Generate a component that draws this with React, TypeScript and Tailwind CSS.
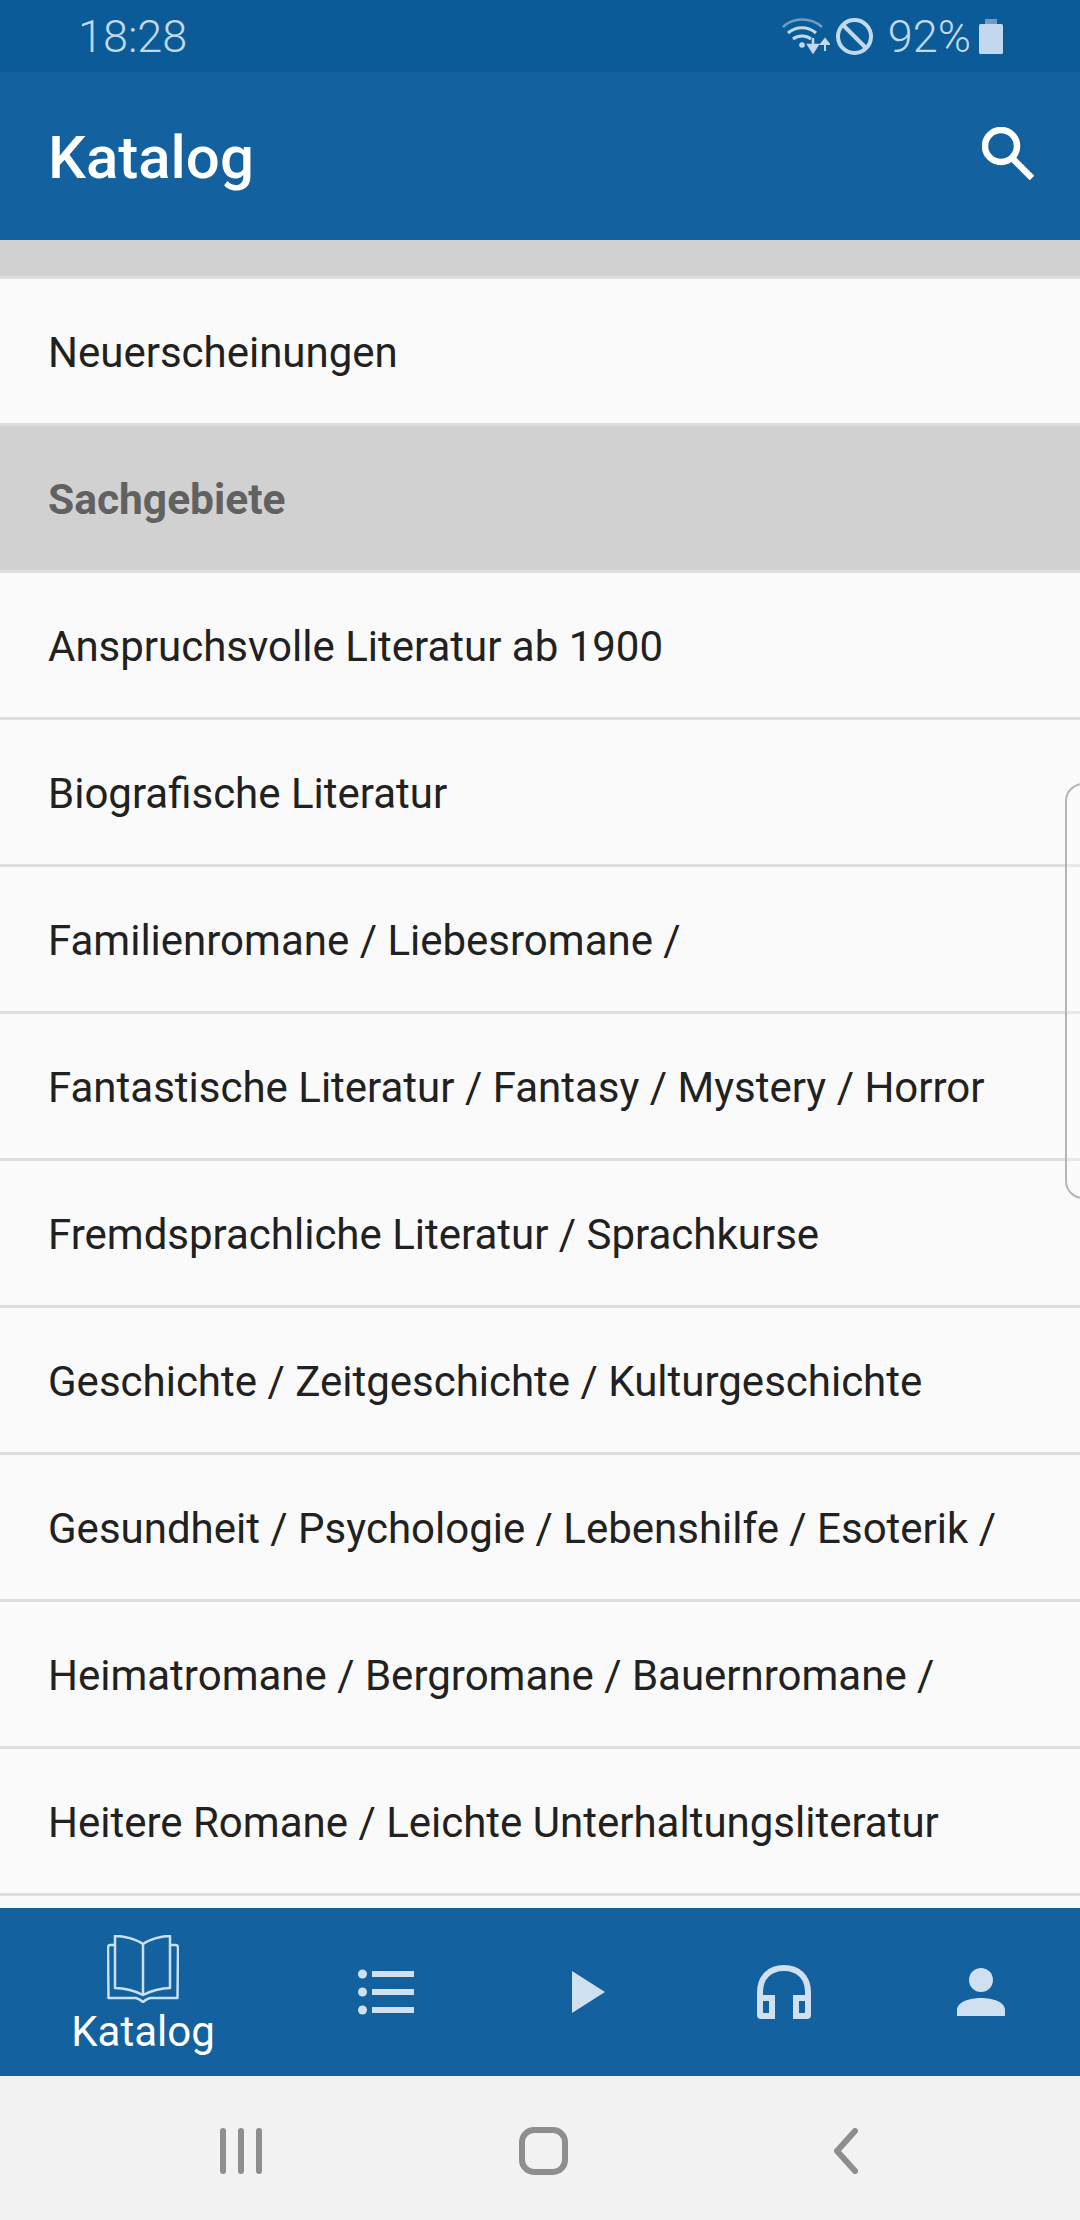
const rows = [
  "Anspruchsvolle Literatur ab 1900",
  "Biografische Literatur",
  "Familienromane / Liebesromane /",
  "Fantastische Literatur / Fantasy / Mystery / Horror",
  "Fremdsprachliche Literatur / Sprachkurse",
  "Geschichte / Zeitgeschichte / Kulturgeschichte",
  "Gesundheit / Psychologie / Lebenshilfe / Esoterik /",
  "Heimatromane / Bergromane / Bauernromane /",
  "Heitere Romane / Leichte Unterhaltungsliteratur",
];

function Row({ label }: { label: string }) {
  return (
    <div className="h-[147px] shrink-0 flex items-center pl-[48px] pt-[3px] border-b-[3px] border-[#dedede] bg-[#fafafa] text-[42px] text-[#212121] whitespace-nowrap">
      {label}
    </div>
  );
}

function StatusIcons() {
  return (
    <div className="flex items-center">
      {/* wifi + data arrows */}
      <svg width="48" height="36" viewBox="0 0 48 36" fill="none" className="mr-[6px]">
        <path d="M1 9 C11 -1 29 -1 40 9" stroke="#6f9cc4" strokeWidth="2.5" />
        <path d="M6 15 C14 8 26 8 34 15" stroke="#c2d8ec" strokeWidth="3" />
        <path d="M11 21 C16 17 24 17 29 21" stroke="#c2d8ec" strokeWidth="3" />
        <circle cx="20" cy="27" r="2.8" fill="#c2d8ec" />
        <path d="M31 20 V30 M26.5 27 L31 34 L35.5 27 Z" stroke="#c2d8ec" strokeWidth="2.5" fill="#c2d8ec" />
        <path d="M43 33 V23 M39 26 L43 21 L47 26 Z" stroke="#c2d8ec" strokeWidth="2" fill="#c2d8ec" />
      </svg>
      {/* do not disturb */}
      <svg width="37" height="37" viewBox="0 0 37 37" fill="none" className="mr-[15px]">
        <circle cx="18.5" cy="18.5" r="16.5" stroke="#c2d8ec" strokeWidth="4" />
        <path d="M7 7 L30 30" stroke="#c2d8ec" strokeWidth="4" />
      </svg>
      <span className="text-[45px] font-light text-[#c2d8ec] leading-none mr-[8px]">92%</span>
      {/* battery */}
      <svg width="24" height="35" viewBox="0 0 24 35">
        <rect x="6" y="0" width="12" height="6" fill="#6f9cc4" />
        <rect x="0" y="5" width="24" height="30" rx="1.5" fill="#c2d8ec" />
      </svg>
    </div>
  );
}

function BookIcon() {
  return (
    <svg width="72" height="68" viewBox="0 0 72 68" fill="none" stroke="#c9e0f5" strokeWidth="2.5" strokeLinejoin="round">
      <path d="M36 9 C29 4 17 1 8 1 V53 C17 53 29 56 36 60 C43 56 55 53 63 53 V1 C55 1 43 4 36 9 Z" />
      <path d="M36 9 V60" />
      <path d="M8 10 H3 Q1 10 1 13 L1.5 63 H29 Q33 64 36 67 Q39 64 43 63 H70.5 L71 13 Q71 10 69 10 H63" />
    </svg>
  );
}

function ListIcon() {
  return (
    <svg width="56" height="46" viewBox="0 0 56 46" fill="#cfe0f0">
      <circle cx="4.5" cy="5" r="4.5" />
      <circle cx="4.5" cy="23" r="4.5" />
      <circle cx="4.5" cy="41" r="4.5" />
      <rect x="14" y="2" width="42" height="6" />
      <rect x="14" y="20" width="42" height="6" />
      <rect x="14" y="38" width="42" height="6" />
    </svg>
  );
}

function PlayIcon() {
  return (
    <svg width="33" height="42" viewBox="0 0 33 42" fill="#cfe0f0">
      <path d="M0 0 L33 21 L0 42 Z" />
    </svg>
  );
}

function HeadphonesIcon() {
  return (
    <svg width="54" height="54" viewBox="0 0 54 54" fill="none">
      <path d="M3 48 V27 C3 12 13 3 27 3 C41 3 51 12 51 27 V48" stroke="#cfe0f0" strokeWidth="6" />
      <path d="M0 30 H18 V54 H4 Q0 54 0 50 Z M6 36 V48 H12 V36 Z" fill="#cfe0f0" fillRule="evenodd" />
      <path d="M54 30 H36 V54 H50 Q54 54 54 50 Z M48 36 V48 H42 V36 Z" fill="#cfe0f0" fillRule="evenodd" />
    </svg>
  );
}

function UserIcon() {
  return (
    <svg width="48" height="48" viewBox="0 0 48 48" fill="#cfe0f0">
      <circle cx="24" cy="12" r="12" />
      <path d="M0 48 V42 C0 34 12 30 24 30 C36 30 48 34 48 42 V48 Z" />
    </svg>
  );
}

export default function App() {
  return (
    <div className="w-[1080px] h-[2220px] flex flex-col overflow-hidden relative [font-family:Roboto,sans-serif]">
      {/* Status bar */}
      <div className="h-[72px] shrink-0 bg-[#0b5b99] flex items-center justify-between pl-[78px] pr-[77px]">
        <span className="text-[45px] font-light text-[#c2d8ec] leading-none">18:28</span>
        <StatusIcons />
      </div>

      {/* App bar */}
      <div className="h-[168px] shrink-0 bg-[#14619f] flex items-center justify-between pl-[48px] pr-[46px]">
        <span className="text-[60px] font-medium text-white leading-none pt-[4px]">Katalog</span>
        <svg width="52" height="53" viewBox="0 0 52 53" fill="none" stroke="white" strokeWidth="6.5" className="-mt-[5px]">
          <circle cx="19" cy="19" r="16" />
          <path d="M30 31 L50 51" />
        </svg>
      </div>

      {/* List */}
      <div className="flex-1 min-h-0 overflow-hidden flex flex-col bg-[#fafafa]">
        <div className="h-[39px] shrink-0 bg-[#d1d1d1] border-b-[3px] border-[#dedede]" />
        <Row label="Neuerscheinungen" />
        <div className="h-[147px] shrink-0 flex items-center pl-[48px] pt-[3px] border-b-[3px] border-[#dedede] bg-[#d1d1d1] text-[42.5px] font-bold text-[#616161]">
          Sachgebiete
        </div>
        {rows.map((r) => (
          <Row key={r} label={r} />
        ))}
      </div>

      {/* Tabs */}
      <div className="h-[168px] shrink-0 bg-[#14619f] grid grid-cols-[286px_200px_200px_196px_198px]">
        <div className="flex flex-col items-center pt-[27px]">
          <BookIcon />
          <span className="text-[42px] text-white leading-none mt-[8px]">Katalog</span>
        </div>
        <div className="flex items-center justify-center">
          <ListIcon />
        </div>
        <div className="flex items-center justify-center pl-[5px]">
          <PlayIcon />
        </div>
        <div className="flex items-center justify-center">
          <HeadphonesIcon />
        </div>
        <div className="flex items-center justify-center">
          <UserIcon />
        </div>
      </div>

      {/* Android nav bar */}
      <div className="h-[144px] shrink-0 bg-[#f2f2f2] relative flex items-center pt-[5px]">
        <div className="w-[220px] shrink-0" />
        <svg width="42" height="46" viewBox="0 0 42 46" fill="#8e8e8e">
          <rect x="0" y="0" width="6" height="46" rx="3" />
          <rect x="18" y="0" width="6" height="46" rx="3" />
          <rect x="36" y="0" width="6" height="46" rx="3" />
        </svg>
        <div className="w-[257px] shrink-0" />
        <div className="w-[49px] h-[48px] rounded-[15px] border-[6px] border-[#8e8e8e]" />
        <div className="w-[266px] shrink-0" />
        <svg width="24" height="46" viewBox="0 0 24 46" fill="none" stroke="#8e8e8e" strokeWidth="6" strokeLinecap="round" strokeLinejoin="round">
          <path d="M21 3 L3 23 L21 43" />
        </svg>
      </div>

      {/* Edge panel handle */}
      <div className="absolute left-[1065px] top-[783px] w-[30px] h-[416px] rounded-l-[18px] border-2 border-[#b5b5b5] bg-white/30" />
    </div>
  );
}
